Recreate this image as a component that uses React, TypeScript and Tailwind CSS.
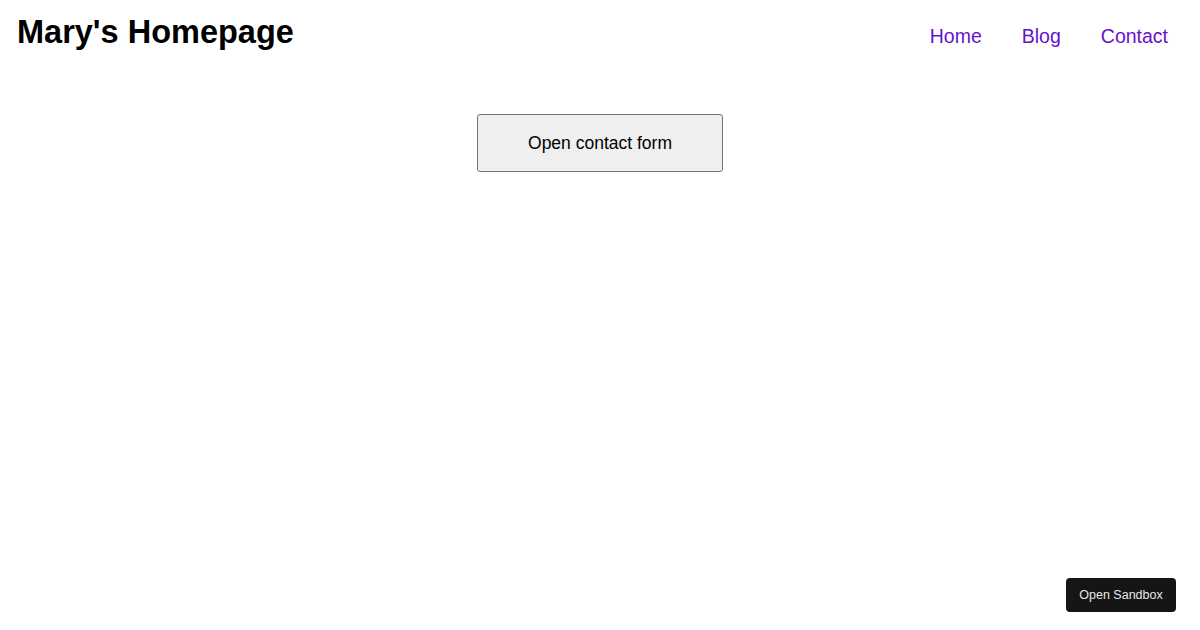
export default function App() {
  return (
    <div className="min-h-[630px] bg-white font-['Liberation_Sans',Arial,sans-serif] text-black">
      <header className="flex items-start justify-between pl-[17px] pr-[32px]">
        <h1 className="pt-[14px] text-[32.5px] font-bold leading-[37px]">Mary's Homepage</h1>
        <nav className="flex gap-10 pt-[25px] text-[19.5px] leading-[23px] text-[#6612cc]">
          <a href="#">Home</a>
          <a href="#">Blog</a>
          <a href="#">Contact</a>
        </nav>
      </header>

      <main className="mt-[63px] flex justify-center">
        <button className="h-[58px] w-[246px] rounded-[3px] border border-[#767676] bg-[#efefef] text-[17.5px] text-black">
          Open contact form
        </button>
      </main>

      <button className="fixed bottom-[18px] right-[24px] h-[34px] w-[110px] rounded-[4px] bg-[#151515] text-center text-[12.5px] text-[#e8e8e8]">
        Open Sandbox
      </button>
    </div>
  );
}
